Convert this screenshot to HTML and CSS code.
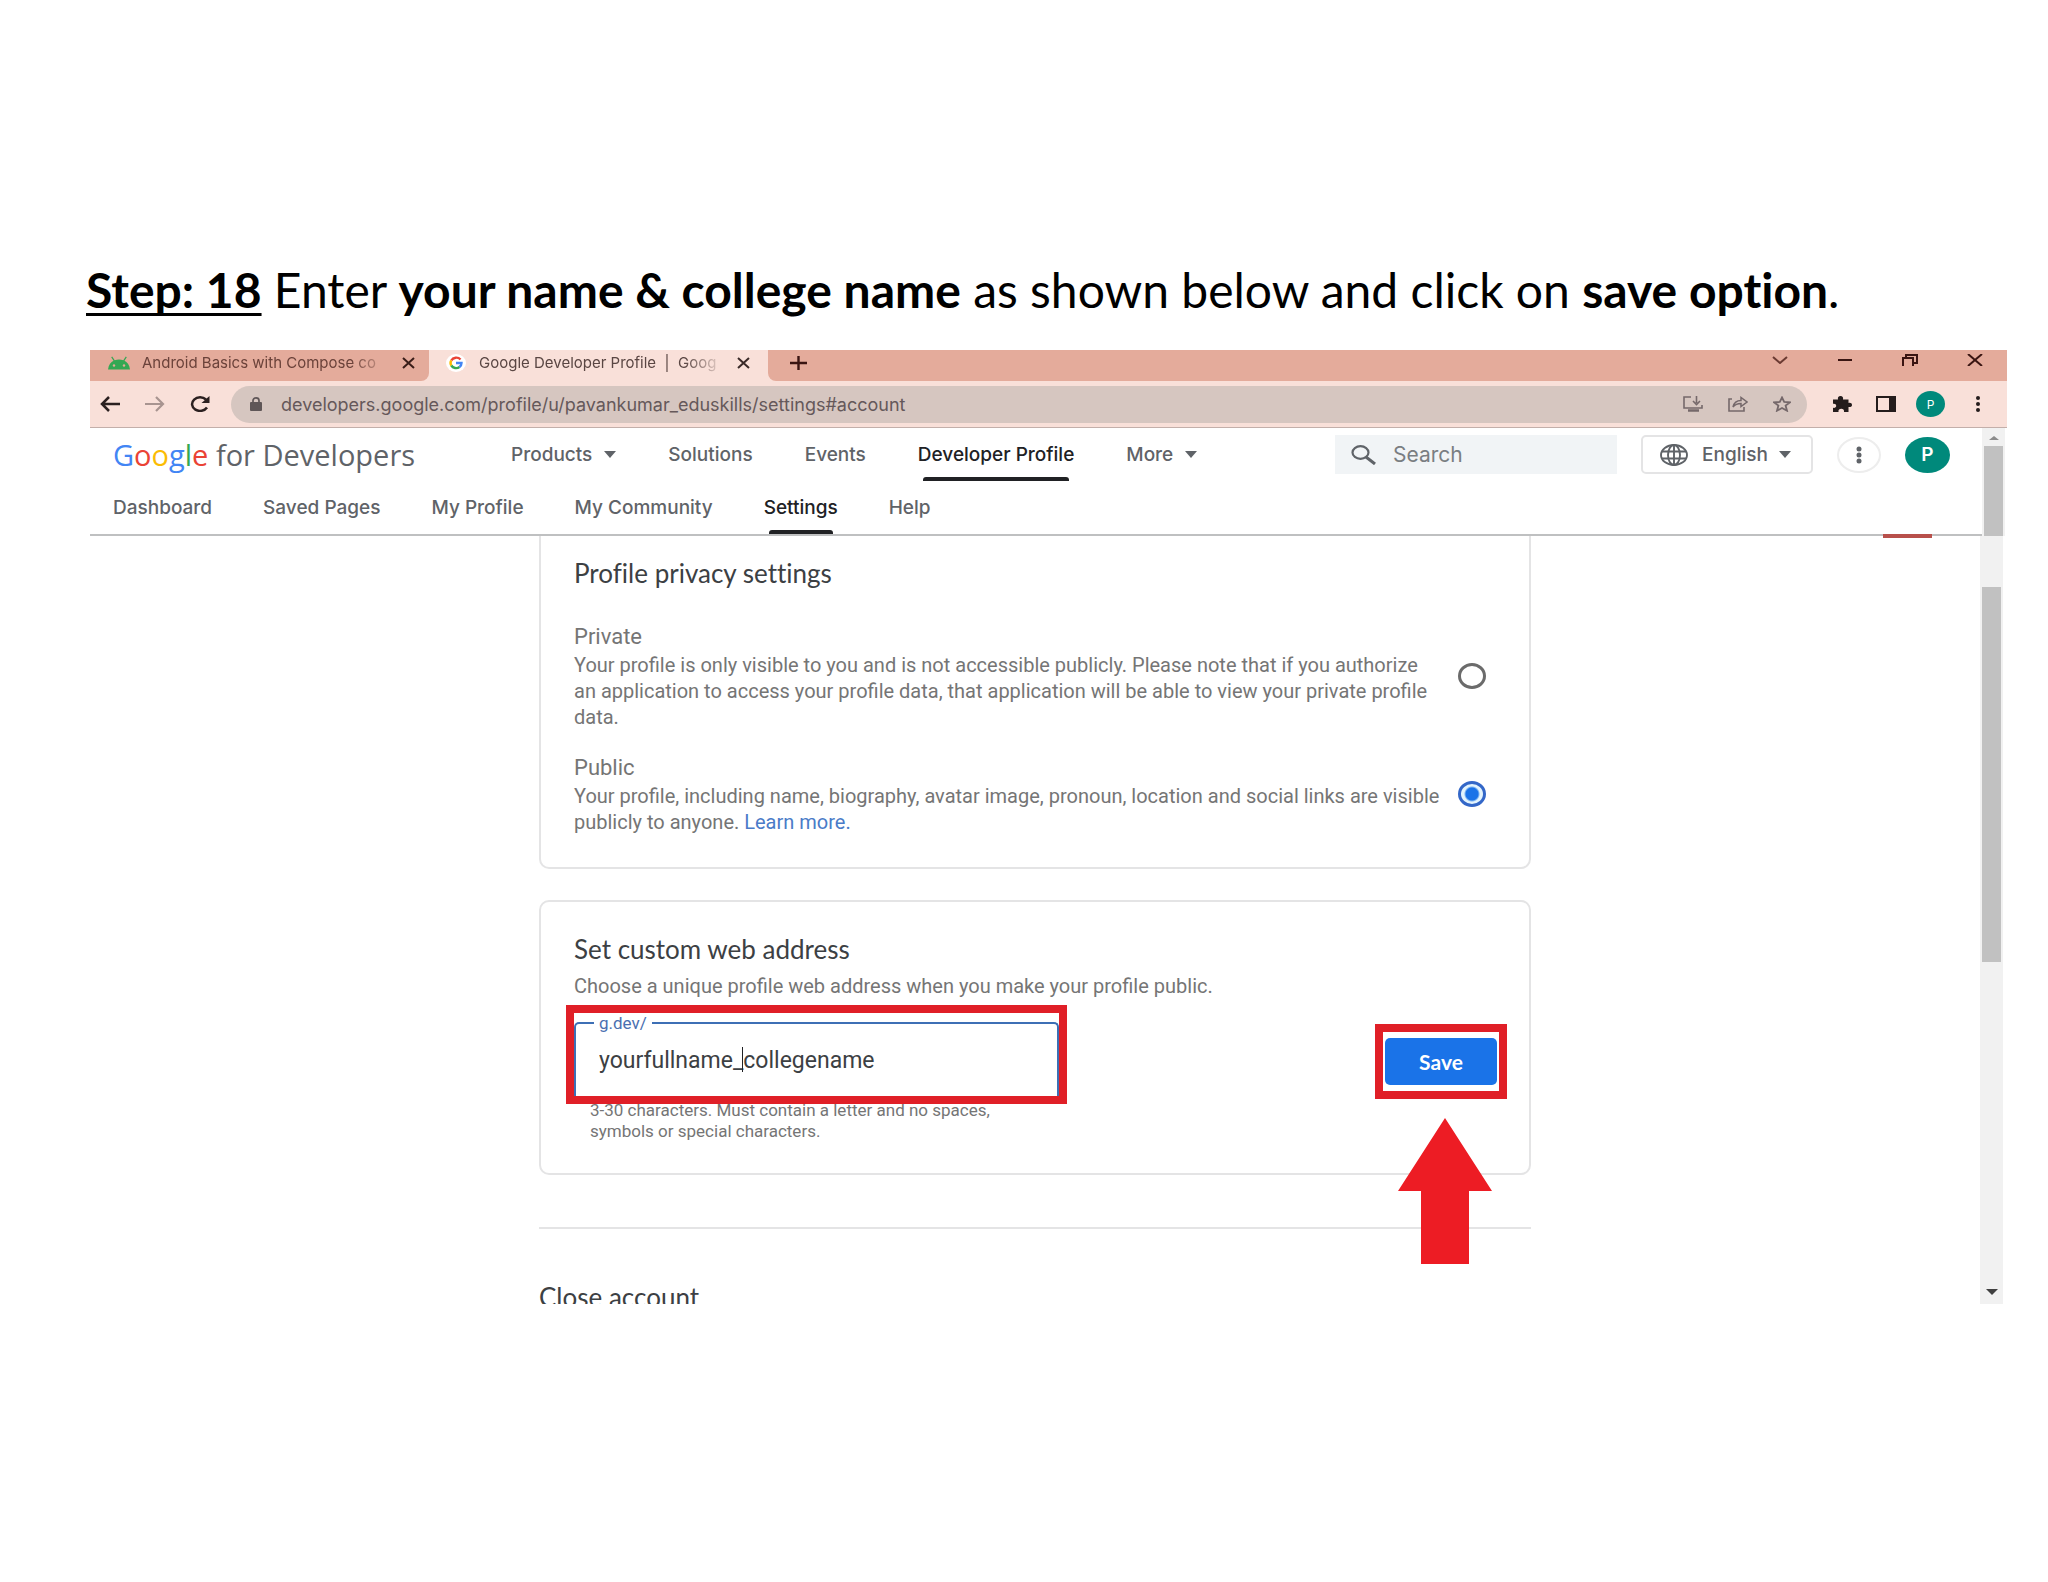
FILE: index.html
```html
<!DOCTYPE html>
<html lang="en">
<head>
  <meta charset="UTF-8" />
  <meta name="viewport" content="width=device-width, initial-scale=1.0"/>
  <title>Step 18 - Save your profile address</title>
  <link rel="stylesheet" href="styles.css">
</head>
<body>

  <h1 class="step"><b class="step-no">Step: 18</b> Enter <b>your name &amp; college name</b> as shown below and click on <b>save option</b>.</h1>

  <div class="browser">

    <!-- Tabs -->
    <div class="tabs">
      <div class="tab">
        <svg class="tab-icon" width="24" height="14" viewBox="0 0 24 14">
          <path d="M1 13.500C1.500 9 4 6 6.500 4.800L4.200 1.200L5.200 0.600L7.700 4.200C10.500 3.200 13.500 3.200 16.300 4.200L18.800 0.600L19.800 1.200L17.500 4.800C20 6 22.500 9 23 13.500Z" fill="#34a853"/>
          <circle cx="7" cy="9.500" r="1.200" fill="#e3ab9a"/><circle cx="17" cy="9.500" r="1.200" fill="#e3ab9a"/>
        </svg>
        <span class="tab-title">Android Basics with Compose co</span>
        <button class="icon-btn" aria-label="Close tab"><svg width="13" height="12" viewBox="0 0 13 12"><path d="M1 1L12 11M12 1L1 11" stroke="#3a1d18" stroke-width="2"/></svg></button>
      </div>
      <div class="tab current">
        <svg class="tab-icon" width="20" height="18" viewBox="0 0 20 18">
          <ellipse cx="10" cy="9" rx="10" ry="9" fill="#fff"/>
          <g fill="none" stroke-width="2.400">
            <path d="M14.500 5.500A5.500 5 0 0 0 5.300 6.500" stroke="#ea4335"/>
            <path d="M5.300 6.500A5.500 5 0 0 0 5.300 11.500" stroke="#fbbc04"/>
            <path d="M5.300 11.500A5.500 5 0 0 0 13.500 13" stroke="#34a853"/>
            <path d="M13.500 13A5 5 0 0 0 15.500 9H10" stroke="#4285f4"/>
          </g>
        </svg>
        <span class="tab-title">Google Developer Profile &nbsp;|&nbsp; Goog</span>
        <button class="icon-btn" aria-label="Close tab"><svg width="13" height="12" viewBox="0 0 13 12"><path d="M1 1L12 11M12 1L1 11" stroke="#3a2a28" stroke-width="2"/></svg></button>
      </div>
      <div class="tab-rest">
        <button class="icon-btn" aria-label="New tab"><svg width="17" height="14" viewBox="0 0 17 14"><path d="M8.500 0V14M0 7H17" stroke="#3a1512" stroke-width="2.400"/></svg></button>
        <div class="window-btns">
          <button class="icon-btn" aria-label="Tab search"><svg width="16" height="8" viewBox="0 0 16 8"><path d="M1 1L8 7L15 1" fill="none" stroke="#6b3a32" stroke-width="2"/></svg></button>
          <button class="icon-btn" aria-label="Minimize"><svg width="16" height="8" viewBox="0 0 16 8"><path d="M1 4H15" stroke="#3a1512" stroke-width="2"/></svg></button>
          <button class="icon-btn" aria-label="Restore"><svg width="16" height="12" viewBox="0 0 16 12"><path d="M1 12V4H11V12M4 4V1H15V9H11" fill="none" stroke="#3a1512" stroke-width="2"/></svg></button>
          <button class="icon-btn" aria-label="Close window"><svg width="16" height="12" viewBox="0 0 16 12"><path d="M1 0L15 12M15 0L1 12" stroke="#3a1512" stroke-width="2"/></svg></button>
        </div>
      </div>
    </div>

    <!-- Toolbar -->
    <div class="toolbar">
      <div class="nav-btns">
        <button class="icon-btn" aria-label="Back"><svg width="20" height="16" viewBox="0 0 20 16"><path d="M20 8H2M9 1L2 8L9 15" fill="none" stroke="#2b2020" stroke-width="2.500"/></svg></button>
        <button class="icon-btn" aria-label="Forward"><svg width="20" height="16" viewBox="0 0 20 16"><path d="M0 8H18M11 1L18 8L11 15" fill="none" stroke="#a89490" stroke-width="2.200"/></svg></button>
        <button class="icon-btn" aria-label="Reload"><svg width="20" height="16" viewBox="0 0 20 16"><path d="M17 11.500A8 6.800 0 1 1 16 3.500" fill="none" stroke="#2b2020" stroke-width="2.500"/><path d="M19.500 0V7H11.500Z" fill="#2b2020"/></svg></button>
      </div>
      <div class="address">
        <svg width="12" height="14" viewBox="0 0 12 14"><rect y="5" width="12" height="9" rx="1" fill="#5f5657"/><path d="M3 6V3.500A3 2.600 0 0 1 9 3.500V6" fill="none" stroke="#5f5657" stroke-width="1.700"/></svg>
        <input class="url" type="text" aria-label="Address" value="developers.google.com/profile/u/pavankumar_eduskills/settings#account">
        <button class="icon-btn" aria-label="Install"><svg width="20" height="16" viewBox="0 0 20 16"><path d="M8 1H1V12H19V9" fill="none" stroke="#75686a" stroke-width="1.600"/><path d="M5 14.500H16" stroke="#75686a" stroke-width="2.500"/><path d="M13.500 0V7M10 5L13.500 8.500L17 5" fill="none" stroke="#75686a" stroke-width="1.600"/></svg></button>
        <button class="icon-btn" aria-label="Share"><svg width="20" height="16" viewBox="0 0 20 16"><path d="M4 3H1V15H16V11" fill="none" stroke="#75686a" stroke-width="1.600"/><path d="M5 11C6 6.500 9 4.500 13 4.500V1.500L19 6L13 10.500V7.500C9.500 7.500 7 8.500 5 11Z" fill="none" stroke="#75686a" stroke-width="1.500"/></svg></button>
        <button class="icon-btn" aria-label="Bookmark"><svg width="18" height="16" viewBox="0 0 18 16"><path d="M9 1.500L11.200 6L17 6.300L12.600 9.500L14 14.700L9 12L4 14.700L5.400 9.500L1 6.300L6.800 6Z" fill="none" stroke="#75686a" stroke-width="1.800"/></svg></button>
      </div>
      <div class="tool-btns">
        <button class="icon-btn" aria-label="Extensions"><svg width="20" height="16" viewBox="0 0 20 16"><path d="M1 3.500H6C5.500 1.500 6.500 0 8.500 0S11.500 1.500 11 3.500H16.500V7C18.500 6.500 20 7.400 20 9S18.500 11.400 16.500 11V16H12C12.400 13.800 11 12.800 9.300 12.800S6 13.800 6.500 16H1V11.800C3 12.200 4.200 11.200 4.200 9.700S3 7.400 1 7.800Z" fill="#241c1c"/></svg></button>
        <button class="icon-btn" aria-label="Side panel"><svg width="20" height="16" viewBox="0 0 20 16"><rect x="1" y="1" width="18" height="14" fill="none" stroke="#241c1c" stroke-width="2"/><path d="M13 1H19V15H13Z" fill="#241c1c"/></svg></button>
        <button class="avatar small" aria-label="Profile">P</button>
        <button class="icon-btn" aria-label="Menu"><svg width="6" height="16" viewBox="0 0 6 16" fill="#241c1c"><circle cx="3" cy="2" r="2"/><circle cx="3" cy="8" r="2"/><circle cx="3" cy="14" r="2"/></svg></button>
      </div>
    </div>

    <!-- Site header -->
    <div class="pane">
      <header class="site-header">
        <div class="top-row">
          <a class="logo" href="#"><span class="brand"><span class="blue">G</span><span class="red">o</span><span class="yellow">o</span><span class="blue">g</span><span class="green">l</span><span class="red">e</span></span> for Developers</a>
          <nav class="menu">
            <a href="#">Products <svg width="12" height="7" viewBox="0 0 12 7"><path d="M0 0H12L6 7Z" fill="#5f6368"/></svg></a>
            <a href="#">Solutions</a>
            <a href="#">Events</a>
            <a class="active" href="#">Developer Profile</a>
            <a href="#">More <svg width="12" height="7" viewBox="0 0 12 7"><path d="M0 0H12L6 7Z" fill="#5f6368"/></svg></a>
          </nav>
          <div class="actions">
            <label class="search">
              <svg width="26" height="20" viewBox="0 0 26 20"><ellipse cx="9.500" cy="7.500" rx="8" ry="6.300" fill="none" stroke="#5f6368" stroke-width="2.200"/><path d="M15 12L24 19" stroke="#5f6368" stroke-width="3"/></svg>
              <input type="search" placeholder="Search" aria-label="Search">
            </label>
            <label class="language">
              <svg width="28" height="22" viewBox="0 0 28 22" fill="none" stroke="#5f6368" stroke-width="1.900"><ellipse cx="14" cy="11" rx="13" ry="10"/><ellipse cx="14" cy="11" rx="6" ry="10"/><path d="M14 1V21M2 7.500H26M2 14.500H26"/></svg>
              <select aria-label="Language"><option>English</option></select>
              <svg width="12" height="7" viewBox="0 0 12 7"><path d="M0 0H12L6 7Z" fill="#5f6368"/></svg>
            </label>
            <button class="more-btn" aria-label="More options"><svg width="6" height="18" viewBox="0 0 6 18" fill="#5f6368"><circle cx="3" cy="3" r="2.500"/><circle cx="3" cy="9" r="2.500"/><circle cx="3" cy="15" r="2.500"/></svg></button>
            <button class="avatar" aria-label="Account">P</button>
          </div>
        </div>
        <nav class="menu sub">
          <a href="#">Dashboard</a>
          <a href="#">Saved Pages</a>
          <a href="#">My Profile</a>
          <a href="#">My Community</a>
          <a class="active" href="#">Settings</a>
          <a href="#">Help</a>
        </nav>
        <span class="red-mark"></span>
      </header>
      <div class="scrollbar head-bar">
        <svg width="10" height="4" viewBox="0 0 10 4"><path d="M0 4L5 0L10 4Z" fill="#8b8b8b"/></svg>
        <div class="thumb"></div>
      </div>
    </div>

    <!-- Settings -->
    <div class="pane">
      <main class="content">
        <section class="card privacy">
          <h2>Profile privacy settings</h2>
          <div class="choice">
            <label for="private">
              <strong>Private</strong>
              Your profile is only visible to you and is not accessible publicly. Please note that if you authorize an application to access your profile data, that application will be able to view your private profile data.
            </label>
            <input type="radio" id="private" name="privacy">
          </div>
          <div class="choice">
            <label for="public">
              <strong>Public</strong>
              Your profile, including name, biography, avatar image, pronoun, location and social links are visible publicly to anyone. <a href="#">Learn more.</a>
            </label>
            <input type="radio" id="public" name="privacy" checked>
          </div>
        </section>

        <section class="card">
          <h2>Set custom web address</h2>
          <p>Choose a unique profile web address when you make your profile public.</p>
          <form class="address-form">
            <div class="field-col">
              <div class="highlight field-mark">
                <fieldset class="field">
                  <legend><label for="custom">g.dev/</label></legend>
                  <input type="text" id="custom" value="yourfullname_collegename">
                  <span class="cursor"></span>
                </fieldset>
              </div>
              <small>3-30 characters. Must contain a letter and no spaces, symbols or special characters.</small>
            </div>
            <div class="highlight save-mark">
              <button class="save" type="button">Save</button>
              <svg class="arrow" width="94" height="146" viewBox="0 0 94 146"><path d="M47 0L94 73H71V146H23V73H0Z" fill="#ed1c24"/></svg>
            </div>
          </form>
        </section>

        <hr>
        <h2 class="close-account">Close account</h2>
      </main>
      <div class="scrollbar page-bar">
        <div class="thumb"></div>
        <svg width="12" height="6" viewBox="0 0 12 6"><path d="M0 0H12L6 6Z" fill="#404040"/></svg>
      </div>
    </div>

  </div>

</body>
</html>
```

FILE: styles.css
```css
:root {
  --tab-bg: #e4ab9b;
  --bar-bg: #f9e0d9;
  --pill-bg: #d6c6c0;
  --grey: #5f6368;
  --line: #e4e4e5;
  --blue: #1a73e8;
  --mark: #e01f27;
  --teal: #00897b;
}

* {
  box-sizing: border-box;
}

body {
  margin: 0;
  padding: 256px 41px 0 90px;
  background: #fff;
  font-family: Inter, sans-serif;
  color: var(--grey);
}

button, input, select {
  font: inherit;
  color: inherit;
  border: none;
  background: none;
  padding: 0;
  margin: 0;
  outline: none;
}

a {
  color: inherit;
  text-decoration: none;
}

h2 {
  margin: 0;
  font-size: 26px;
  line-height: 32px;
  font-weight: 400;
  font-family: Lato, sans-serif;
  font-variant-ligatures: none;
  color: #3c4043;
}

.step {
  margin: 0 0 26px -4px;
  font-family: Lato, sans-serif;
  font-size: 48px;
  line-height: 68px;
  font-weight: 400;
  font-variant-ligatures: none;
  color: #000;
  white-space: nowrap;
}

.step-no {
  text-decoration: underline;
  text-decoration-thickness: 3px;
  text-underline-offset: 5px;
  text-decoration-skip-ink: none;
}

.icon-btn {
  display: flex;
  align-items: center;
  justify-content: center;
}

/* Tabs */
.tabs {
  display: flex;
  height: 31px;
  background: var(--bar-bg);
  font-size: 15px;
  color: #6b423a;
}

.tab {
  display: flex;
  align-items: center;
  width: 339px;
  gap: 11px;
  padding: 0 14px 6px 17px;
  background: var(--tab-bg);
  border-radius: 0 0 8px 0;
}

.tab.current {
  background: none;
  padding-right: 18px;
  gap: 13px;
  color: #5a4643;
}

.tab-title {
  flex: 1;
  overflow: hidden;
  white-space: nowrap;
  mask-image: linear-gradient(to right, #000 84%, transparent);
}

.tab-rest {
  display: flex;
  flex: 1;
  justify-content: space-between;
  padding: 0 24px 6px 22px;
  background: var(--tab-bg);
  border-radius: 0 0 0 8px;
}

.window-btns {
  display: flex;
  gap: 49px;
  height: 19px;
}

/* Toolbar */
.toolbar {
  display: flex;
  align-items: center;
  height: 47px;
  padding: 0 26px 0 10px;
  background: var(--bar-bg);
  border-bottom: 1px solid #c3afaa;
}

.nav-btns {
  display: flex;
  gap: 25px;
  margin-right: 21px;
}

.address {
  display: flex;
  flex: 1;
  align-items: center;
  gap: 25px;
  height: 37px;
  padding: 0 16px 0 19px;
  border-radius: 19px;
  background: var(--pill-bg);
}

.url {
  flex: 1;
  margin-left: -6px;
  font-size: 18px;
  color: #65585a;
}

.tool-btns {
  display: flex;
  align-items: center;
  gap: 24px;
  margin-left: 25px;
}

.avatar {
  width: 45px;
  height: 36px;
  border-radius: 50%;
  background: var(--teal);
  color: #fff;
  font-size: 19px;
  font-weight: 600;
}

.avatar.small {
  width: 29px;
  height: 26px;
  margin: 0 6px 0 -4px;
  font-size: 12px;
  font-weight: 400;
}

/* Site header */
.pane {
  display: flex;
}

.site-header {
  position: relative;
  flex: 1;
  height: 108px;
  border-bottom: 2px solid #bfc0c1;
}

.top-row {
  display: flex;
  align-items: center;
  height: 53px;
  padding: 0 32px 0 23px;
}

.logo {
  width: 398px;
  font-family: "Open Sans", sans-serif;
  font-size: 29px;
  white-space: nowrap;
}

.brand {
  font-weight: 500;
}

.blue { color: #4285f4; }
.red { color: #ea4335; }
.yellow { color: #fbbc04; }
.green { color: #34a853; }

.menu {
  display: flex;
  gap: 52px;
  height: 53px;
  font-size: 19px;
  font-weight: 500;
}

.menu a {
  position: relative;
  display: flex;
  align-items: center;
  gap: 12px;
  white-space: nowrap;
}

.menu .active {
  color: #202124;
}

.menu .active::after {
  content: "";
  position: absolute;
  left: 5px;
  right: 5px;
  bottom: 0;
  height: 4px;
  border-radius: 3px 3px 0 0;
  background: #202124;
}

.menu.sub {
  gap: 51px;
  padding-left: 23px;
}

.actions {
  display: flex;
  align-items: center;
  gap: 24px;
  margin-left: auto;
}

.search {
  display: flex;
  align-items: center;
  gap: 16px;
  width: 282px;
  height: 39px;
  padding-left: 16px;
  background: #f1f4f6;
  font-size: 21px;
}

.search input {
  width: 200px;
}

.search input::placeholder {
  color: #7a7e82;
}

.language {
  display: flex;
  align-items: center;
  gap: 14px;
  width: 172px;
  height: 39px;
  padding: 0 20px 0 17px;
  border: 2px solid var(--line);
  border-radius: 5px;
  font-size: 19px;
  font-weight: 500;
}

.language select {
  flex: 1;
  width: 74px;
  appearance: none;
}

.language svg {
  flex: none;
}

.language select + svg {
  margin-left: -6px;
}

.more-btn {
  width: 44px;
  height: 36px;
  border: 2px solid #ededed;
  border-radius: 50%;
}

.more-btn svg {
  display: block;
  margin: auto;
}

.red-mark {
  position: absolute;
  right: 50px;
  bottom: -4px;
  width: 49px;
  height: 4px;
  background: #b8504b;
}

/* Scrollbars */
.scrollbar {
  display: flex;
  flex-direction: column;
  align-items: center;
  width: 23px;
  margin-right: 4px;
  background: #f1f1f1;
}

.scrollbar .thumb {
  width: 19px;
  background: #c1c1c1;
}

.head-bar {
  gap: 6px;
  padding-top: 8px;
  margin-right: 2px;
}

.head-bar .thumb {
  flex: 1;
}

.page-bar {
  justify-content: space-between;
  padding: 51px 0 9px;
}

.page-bar .thumb {
  height: 375px;
}

/* Settings */
.content {
  flex: 1;
  font-family: Roboto, sans-serif;
  font-size: 20px;
  line-height: 26px;
  color: #757575;
}

.card {
  max-width: 992px;
  margin: 0 auto 31px;
  padding: 31px 33px;
  border: 2px solid var(--line);
  border-radius: 10px;
}

.privacy {
  padding: 21px 33px 32px;
  border-top: none;
  border-radius: 0 0 10px 10px;
}

.choice {
  display: flex;
  align-items: center;
  justify-content: space-between;
  margin-top: 22px;
}

.privacy h2 + .choice {
  margin-top: 32px;
}

.choice label {
  max-width: 867px;
}

.choice strong {
  display: block;
  font-size: 22px;
  line-height: 31px;
  font-weight: 400;
}

.choice a {
  color: #4a7bc8;
}

.choice input {
  appearance: none;
  flex: none;
  width: 28px;
  height: 26px;
  margin-right: 10px;
  border: 3px solid #6b6b6b;
  border-radius: 50%;
}

.choice input:checked {
  border-color: #3367c8;
  background: radial-gradient(circle, var(--blue) 6px, #e3f4fd 8px);
}

.card p {
  margin: 8px 0 6px;
}

.address-form {
  display: flex;
  align-items: flex-start;
  justify-content: space-between;
}

.field-col small {
  display: block;
  width: 420px;
  margin: -4px 0 0 16px;
  font-size: 17px;
  line-height: 21px;
}

.highlight {
  position: relative;
  border: 8px solid var(--mark);
}

.field-mark {
  z-index: 1;
  width: 501px;
  height: 99px;
  margin-left: -8px;
}

.field {
  position: relative;
  height: 83px;
  margin: 0;
  padding: 0 0 0 23px;
  border: 2px solid #3d6fb5;
  border-bottom: none;
  border-radius: 5px 5px 0 0;
}

.field legend {
  margin-left: -5px;
  padding: 0 5px;
  font-size: 17px;
  line-height: 20px;
  color: #4a6fb0;
}

.field input {
  display: block;
  width: 100%;
  height: 54px;
  font-size: 23px;
  color: #3c4043;
}

.cursor {
  position: absolute;
  left: 166px;
  top: 14px;
  width: 1px;
  height: 25px;
  background: #202124;
}

.save-mark {
  width: 132px;
  height: 75px;
  margin: 19px -11px 0 0;
  padding: 6px 2px;
}

.save {
  width: 112px;
  height: 47px;
  border-radius: 5px;
  background: var(--blue);
  color: #fff;
  font-family: Lato, sans-serif;
  font-size: 21px;
  font-weight: 700;
}

.arrow {
  position: absolute;
  top: 86px;
  left: 15px;
}

hr {
  max-width: 992px;
  margin: 52px auto;
  border: none;
  border-top: 2px solid var(--line);
}

.close-account {
  max-width: 992px;
  height: 23px;
  margin: 0 auto;
  overflow: hidden;
}
```
